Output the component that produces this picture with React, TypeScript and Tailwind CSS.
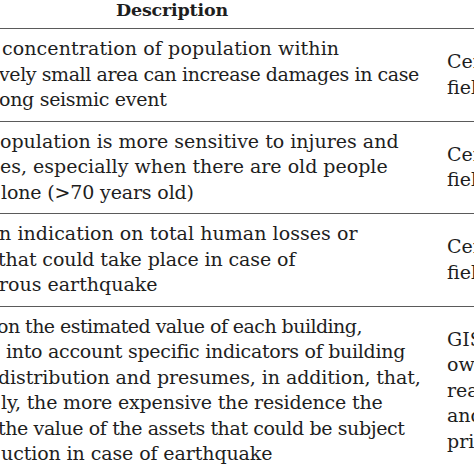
import React from "react";

type Line = { t: string; cls?: string };
type Row = { lines: Line[]; right: string[] };

const rows: Row[] = [
  {
    lines: [
      { t: "concentration of population within", cls: "ml-[2px] tracking-[0.1px]" },
      { t: "vely small area can increase damages in case", cls: "-ml-[1px] tracking-[-0.42px]" },
      { t: "ong seismic event", cls: "-ml-[1px] tracking-[-0.3px]" },
    ],
    right: ["Census", "field"],
  },
  {
    lines: [
      { t: "opulation is more sensitive to injures and", cls: "ml-[0px]" },
      { t: "es, especially when there are old people", cls: "ml-[0px]" },
      { t: "lone (>70 years old)", cls: "ml-[1px] tracking-[-0.15px]" },
    ],
    right: ["Census", "field"],
  },
  {
    lines: [
      { t: "n indication on total human losses or", cls: "-ml-[1px] tracking-[0.05px]" },
      { t: "that could take place in case of", cls: "-ml-[2px] tracking-[-0.1px]" },
      { t: "rous earthquake", cls: "-ml-[1px]" },
    ],
    right: ["Census", "field"],
  },
  {
    lines: [
      { t: "on the estimated value of each building,", cls: "-ml-[3px] tracking-[-0.55px]" },
      { t: "into account specific indicators of building", cls: "ml-[6px] tracking-[-0.28px]" },
      { t: "distribution and presumes, in addition, that,", cls: "-ml-[2px] tracking-[-0.08px]" },
      { t: "ly, the more expensive the residence the", cls: "ml-[1px] tracking-[-0.18px]" },
      { t: "the value of the assets that could be subject", cls: "-ml-[2px] tracking-[-0.4px]" },
      { t: "uction in case of earthquake", cls: "ml-[1px] tracking-[-0.1px]" },
    ],
    right: ["GIS", "owner", "real", "and", "price"],
  },
];

export default function App() {
  return (
    <div
      className="w-[474px] h-[474px] overflow-hidden bg-white text-[#1e1e1e]"
      style={{ fontFamily: '"DejaVu Serif", "Liberation Serif", serif' }}
    >
      <div className="-ml-[96px] w-[640px]">
        <div className="grid grid-cols-[536px_104px] border-b-[1.5px] border-[#5a5a5a] h-[29px]">
          <div className="text-center font-bold text-[17.5px] leading-[20px] tracking-[-0.2px]">
            Description
          </div>
          <div />
        </div>
        {rows.map((r, i) => (
          <div
            key={i}
            className="grid grid-cols-[536px_104px] border-b-[1.5px] border-[#5a5a5a]"
          >
            <div className="pl-[96px] pt-[7px] pb-[8px] text-[19px] leading-[25.5px] whitespace-nowrap">
              {r.lines.map((l, j) => (
                <div key={j} className={l.cls}>
                  {l.t}
                </div>
              ))}
            </div>
            <div className="flex flex-col justify-center pl-[7px] text-[19px] leading-[25.5px] whitespace-nowrap">
              {r.right.map((w, j) => (
                <div key={j}>{w}</div>
              ))}
            </div>
          </div>
        ))}
      </div>
    </div>
  );
}
